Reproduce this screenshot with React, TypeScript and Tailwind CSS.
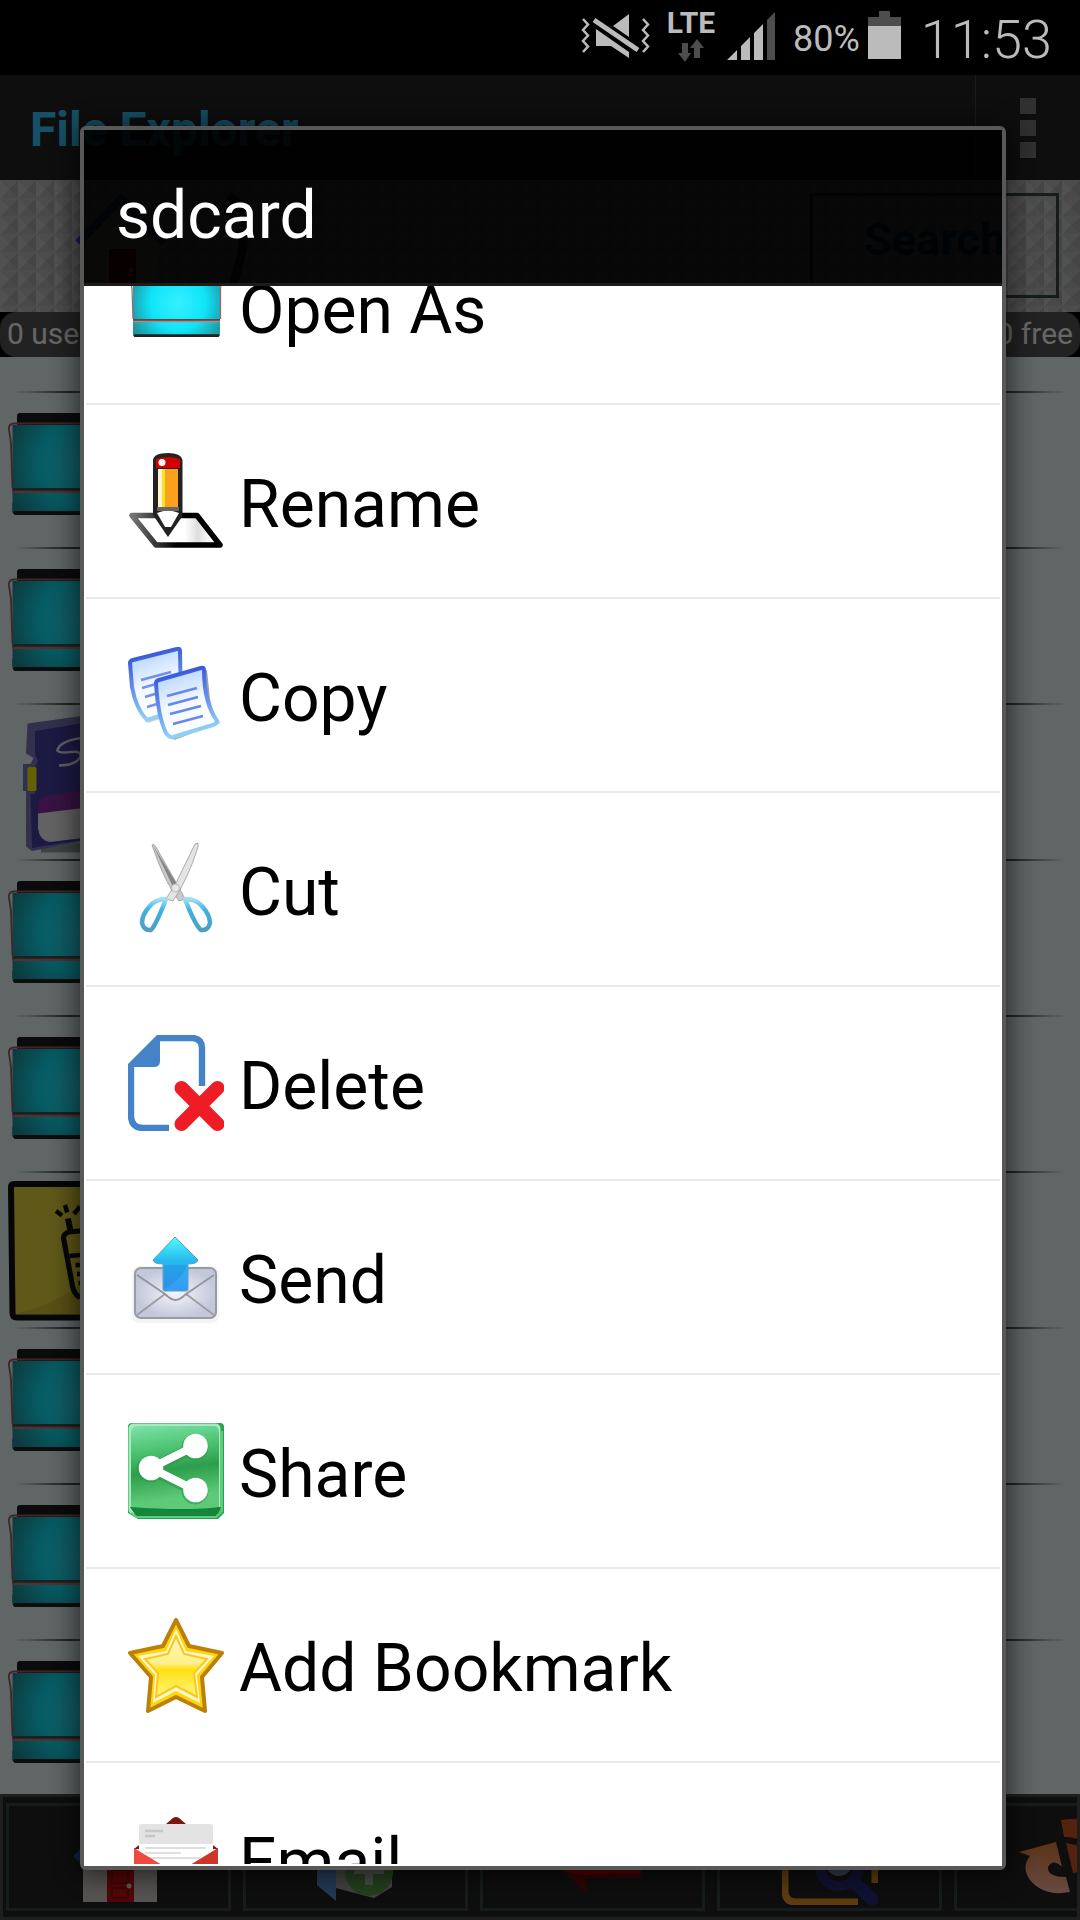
import { useLayoutEffect, useRef } from "react";
import type { ReactNode } from "react";

function FolderIcon() {
  return (
    <svg viewBox="0 0 96 96" className="size-full">
      <defs>
        <radialGradient id="folderFill" gradientUnits="userSpaceOnUse" cx="50" cy="44" r="50">
          <stop offset="0" stopColor="#35f0ff" />
          <stop offset="0.55" stopColor="#10e4f8" />
          <stop offset="1" stopColor="#20959f" />
        </radialGradient>
      </defs>
      <path d="M8 18 V12 Q8 10 10 10 H86 Q88 10 88 12 V18 Z" fill="#1c1c1c" />
      <path d="M5 70 H92 V75 Q92 78 89 78 H8 Q5 78 5 75 Z" fill="#222" />
      <path d="M5 18 H92 V76 H5 Z" fill="url(#folderFill)" />
      <path d="M5 60 L4 30 L2.500 20 Q3 17 6 17 H90 Q94 17 94 20 L92.500 30 V60" fill="none" stroke="#a5605e" strokeWidth="1.200" />
      <path d="M5 61.500 H92" stroke="#4a4f50" strokeWidth="3" />
      <path d="M5 62.500 H92" stroke="#c98078" strokeWidth="1.500" />
      <path d="M6 76.500 H91" stroke="#222" strokeWidth="2.500" />
    </svg>
  );
}

function SdCardIcon() {
  return (
    <svg viewBox="0 0 96 96" className="size-full">
      <path d="M24 92 L80 84 V95 H24 Z" fill="#9da5a5" />
      <path d="M15 9 L80 0 V82 L18 94 L14 91 V54 H12 V36 H17 L19 32 L14 29 Z" fill="#8078c4" />
      <path d="M20 14 L80 4 V82 L18 92 L17 56 H20 V38 L22 34 L20 30 Z" fill="#4640a8" />
      <rect x="15" y="38" width="6" height="16" rx="1" fill="#fff200" />
      <path d="M22 70 V64 Q22 58 30 57 L80 49 V66 Z" fill="#8a2ea8" />
      <path d="M22 69 L80 62 V82 L30 88 Q23 87 22 79 Z" fill="#f5f5f5" />
      <path d="M56 18 Q36 20 35 27 Q36 29 44 28 Q52 27 50 32 Q46 37 36 37" fill="none" stroke="#f0eeff" strokeWidth="1.800" />
    </svg>
  );
}

function PhoneIcon() {
  return (
    <svg viewBox="0 0 96 96" className="size-full">
      <path d="M4 6 Q4 4 6 4 H90 Q93 4 93 7 V90 Q93 93 90 93 H8 Q5 93 5 90 Z" fill="#eddc3e" stroke="#111" strokeWidth="4" />
      <path d="M5 91 Q30 86 55 68 L90 50 V91 Z" fill="#c6a820" opacity="0.4" />
      <path d="M34 22 L38 25 M40 18 L41.500 23 M50 19 L46 24" stroke="#111" strokeWidth="3" />
      <path d="M42 27 L44 37" stroke="#111" strokeWidth="4" />
      <path d="M39 40 Q39 37 43 36 L62 34 L67 76 L49 79 Q46 77 45 72 Z" fill="none" stroke="#111" strokeWidth="3.500" />
      <path d="M43 52 L64 50 M47 58 h4 M48 64 h4 M49 70 h4" stroke="#111" strokeWidth="3" />
    </svg>
  );
}

function RenameIcon() {
  return (
    <svg viewBox="0 0 96 96" className="size-full">
      <defs>
        <linearGradient id="paper" x1="0" y1="0" x2="1" y2="0">
          <stop offset="0.6" stopColor="#fff" />
          <stop offset="0.75" stopColor="#ddd" />
          <stop offset="0.9" stopColor="#fff" />
        </linearGradient>
        <linearGradient id="ink" x1="0" y1="0" x2="1" y2="0">
          <stop offset="0" stopColor="#777" />
          <stop offset="0.5" stopColor="#000" />
        </linearGradient>
      </defs>
      <path d="M4 62.500 H69 L92 92 H28 Z" fill="url(#paper)" stroke="url(#ink)" strokeWidth="5.500" strokeLinejoin="round" />
      <path d="M25 7 Q26 0 40 0 Q53 0 54.500 7 V63 L40 84 L25 62 Z" fill="#222" />
      <path d="M28 6 Q40 2 52 6 V15 H28 Z" fill="#d20000" />
      <circle cx="34" cy="9.500" r="3.500" fill="#fff" />
      <path d="M30 16 H50 V54 H30 Z" fill="#fba11b" />
      <path d="M30 16 H35 V54 H30 Z" fill="#fff6d0" />
      <path d="M34 16 H37 V54 H34 Z" fill="#fbe02c" />
      <path d="M29 60 Q40 55 51 60 L43 74 H37 Z" fill="#fff" />
      <path d="M29 54 H51 V58 H29 Z" fill="#666" />
    </svg>
  );
}

function CopyIcon() {
  return (
    <svg viewBox="0 0 96 96" className="size-full">
      <defs>
        <linearGradient id="sheet" x1="0" y1="0" x2="0.3" y2="1">
          <stop offset="0" stopColor="#a5cbff" />
          <stop offset="0.6" stopColor="#f4f9ff" />
          <stop offset="1" stopColor="#fff" />
        </linearGradient>
        <linearGradient id="sheetEdge" x1="0" y1="0" x2="0.2" y2="1">
          <stop offset="0" stopColor="#2c4bd4" />
          <stop offset="0.5" stopColor="#5d86ee" />
          <stop offset="1" stopColor="#8fd0f5" />
        </linearGradient>
      </defs>
      <path d="M4 18 L53 5 L56 64 L20 76 Q10 64 6 42 Z" fill="#777" opacity="0.35" />
      <path d="M2 16 Q2 14 5 13 L49 2 Q52 1 52 4 L53 62 L19 73 Q8 62 4 40 Z" fill="url(#sheet)" stroke="url(#sheetEdge)" strokeWidth="4" />
      <path d="M13 33 L43 25 M14 41 L35 35 M17 50 L30 46 M19 60 L29 57" stroke="#7290ee" strokeWidth="2.500" />
      <path d="M31 38 L79 23 L82 52 Q85 66 92 76 L46 93 Q35 80 31 38 Z" fill="#444" opacity="0.5" />
      <path d="M28 36 Q28 34 31 33 L73 21 Q76 20 76 23 Q76 56 89 74 Q89 77 85 78 L45 90 Q41 91 38 86 Q30 70 28 36 Z" fill="url(#sheet)" stroke="url(#sheetEdge)" strokeWidth="4" />
      <path d="M39 49 L69 41 M40 58 L70 50 M42 67 L73 59 M45 77 L75 69" stroke="#6788ea" strokeWidth="2.800" />
    </svg>
  );
}

function CutIcon() {
  return (
    <svg viewBox="0 0 96 96" className="size-full">
      <defs>
        <linearGradient id="handle" x1="0" y1="0" x2="0" y2="1">
          <stop offset="0" stopColor="#9fdff5" />
          <stop offset="0.35" stopColor="#3db2e2" />
          <stop offset="1" stopColor="#4e9fc0" />
        </linearGradient>
      </defs>
      <path d="M24 4 Q26 2 28 6 L54 52 L57 58 L51 60 Q36 40 24 4 Z" fill="#c9c9c9" stroke="#999" strokeWidth="0.800" />
      <path d="M26 6 L49 43 L46 48 Z" fill="#858585" />
      <path d="M70 2 L67 3 L48 42 L38 58 L45 60 Q60 38 70 6 Z" fill="#e4e4e4" stroke="#999" strokeWidth="0.800" />
      <circle cx="47.500" cy="47" r="4" fill="#e8e8e8" stroke="#aaa" strokeWidth="0.800" />
      <path d="M38 58 Q27 58 21 66 Q14 74 14 82 Q16 90 23 89 Q28 84 38 58 Z" fill="#fff" stroke="url(#handle)" strokeWidth="4.500" strokeLinejoin="round" />
      <path d="M57 58 Q68 58 74 65 Q82 74 82 82 Q80 90 73 89 Q67 84 57 58 Z" fill="#fff" stroke="url(#handle)" strokeWidth="4.500" strokeLinejoin="round" />
    </svg>
  );
}

function DeleteIcon() {
  return (
    <svg viewBox="0 0 96 96" className="size-full">
      <path d="M30 3 H65 Q74 4 74 13 V51 M3 30 V82 Q4 93 15 93 H41" fill="none" stroke="#4583c8" strokeWidth="6.400" />
      <path d="M0 29 L29 0 H32 V26 Q32 32 26 32 H0 Z" fill="#4583c8" />
      <path d="M53.500 53 L89.500 89 M89.500 53 L53.500 89" stroke="#ee1c25" strokeWidth="14" strokeLinecap="round" />
    </svg>
  );
}

function SendIcon() {
  return (
    <svg viewBox="0 0 96 96" className="size-full">
      <defs>
        <radialGradient id="envelope">
          <stop offset="0" stopColor="#f5f5fb" />
          <stop offset="1" stopColor="#c3c7da" />
        </radialGradient>
        <linearGradient id="arrowUp" x1="0" y1="0" x2="0" y2="1">
          <stop offset="0" stopColor="#4dfcff" />
          <stop offset="0.45" stopColor="#27b8ee" />
          <stop offset="1" stopColor="#3799f5" />
        </linearGradient>
      </defs>
      <rect x="4" y="37" width="87" height="57" rx="7" fill="#f4f4f4" />
      <rect x="7" y="39" width="81" height="50" rx="6" fill="url(#envelope)" stroke="#999aa2" strokeWidth="2" />
      <path d="M9 86 L37 65 M86 86 L58 65" stroke="#9b9ca3" strokeWidth="1.800" />
      <path d="M9 46 L37 65 Q43 71 47.500 71 Q52 71 58 65 L86 46" fill="none" stroke="#94959c" strokeWidth="1.800" />
      <path d="M47 8 L70 31 Q69 35 60 35 V60 Q60 62 58 62 H37 Q35 62 35 60 V35 Q26 35 25 31 Z" fill="url(#arrowUp)" stroke="#5a9fc0" strokeWidth="1" />
      <path d="M36 60 Q53 52 59 36 H36 Z" fill="#1978d0" opacity="0.3" />
    </svg>
  );
}

function ShareIcon() {
  return (
    <svg viewBox="0 0 96 96" className="size-full">
      <defs>
        <linearGradient id="shareFill" x1="0.2" y1="0" x2="0.35" y2="1">
          <stop offset="0" stopColor="#78e0a4" />
          <stop offset="0.3" stopColor="#4cc270" />
          <stop offset="0.55" stopColor="#2d9e4b" />
          <stop offset="0.9" stopColor="#5dca78" />
        </linearGradient>
      </defs>
      <path d="M4 0 H92 Q96 0 96 4 V90 L90 96 H10 L0 90 V4 Q0 0 4 0 Z" fill="#2da050" />
      <rect x="0.500" y="0.500" width="92" height="91" rx="5" fill="#a5ebbf" />
      <path d="M2 84 H93 L90 93 H8 Z" fill="#15853a" />
      <path d="M3 10 Q3 3 10 3 H86 Q91 3 91 10 V84 Q60 88 3 84 Z" fill="url(#shareFill)" />
      <path d="M3 90 L9 94 H88 L94 88 V8" fill="none" stroke="#58cf80" strokeWidth="2" />
      <g stroke="#279a49" fill="#279a49" opacity="0.6">
        <path d="M67 24 L22 46 L67 68" fill="none" strokeWidth="11" />
        <circle cx="67" cy="24" r="13" />
        <circle cx="22" cy="46" r="13" />
        <circle cx="67" cy="68" r="13" />
      </g>
      <path d="M67 23 L23 45 L67 67" fill="none" stroke="#fff" strokeWidth="8" />
      <circle cx="67.500" cy="23" r="12.300" fill="#fff" />
      <circle cx="23" cy="45" r="12.300" fill="#fff" />
      <circle cx="67.500" cy="67" r="12.300" fill="#fff" />
    </svg>
  );
}

function StarIcon() {
  const star = "M48 3 L61 29 L94 36 L74 60 L77 94 L48 80 L20 94 L23 60 L2 36 L35 29 Z";
  return (
    <svg viewBox="0 0 96 96" className="size-full">
      <defs>
        <linearGradient id="starFill" x1="0" y1="0" x2="0" y2="1">
          <stop offset="0" stopColor="#fff7c0" />
          <stop offset="0.45" stopColor="#fff08a" />
          <stop offset="0.55" stopColor="#ffe010" />
          <stop offset="1" stopColor="#fff780" />
        </linearGradient>
      </defs>
      <path d={star} fill="#ffd60a" stroke="#bb8008" strokeWidth="4" strokeLinejoin="round" />
      <path d="M48 12 L58 34 L86 39 L69 58 L72 86 L48 74 L25 86 L27 58 L10 39 L38 34 Z" fill="#fff6cf" />
      <path d="M48 19 L56 37 L79 42 L66 56 L69 80 L48 69 L28 80 L30 56 L17 42 L40 37 Z" fill="url(#starFill)" stroke="#fbc817" strokeWidth="2" />
    </svg>
  );
}

function EmailIcon() {
  return (
    <svg viewBox="0 0 96 96" className="size-full">
      <path d="M38 13 L45 7 Q48 5 51 7 L58 13 L90 38 H6 Z" fill="#7c1710" />
      <path d="M11 15 Q11 13 13 13 H83 Q85 13 85 15 V80 H11 Z" fill="#fff" />
      <path d="M11 15 Q11 13 13 13 H83 Q85 13 85 15 V33 H11 Z" fill="#e3e3e3" />
      <path d="M17 20 H35 M17 25 H27" stroke="#c6c6c6" strokeWidth="2.500" />
      <path d="M17 37 H78 M17 42 H53 M20 47 H72" stroke="#dedede" strokeWidth="2" />
      <path d="M6 37 L34 54 V92 H10 Q6 92 6 88 Z" fill="#ee4b3e" />
      <path d="M90 37 L62 54 V92 H86 Q90 92 90 88 Z" fill="#cc3529" />
      <path d="M8 92 L48 62 L88 92 Z" fill="#e04236" />
    </svg>
  );
}

function HomeIcon() {
  return (
    <svg viewBox="0 0 96 96" className="size-full">
      <path d="M12 48 L48 12 L86 48 V93 H12 Z" fill="#d6d2cc" />
      <path d="M5 50 L48 6 L91 50" fill="none" stroke="#3350b0" strokeWidth="8" />
      <rect x="36" y="56" width="27" height="37" fill="#d00e10" />
      <path d="M41 61 H57 V74 H41 Z M41 79 H57 V89 H41 Z" fill="none" stroke="#a00a0a" strokeWidth="2" />
      <circle cx="58" cy="77" r="2.500" fill="#e0e0e0" />
    </svg>
  );
}

function NewFolderIcon() {
  return (
    <svg viewBox="0 0 96 96" className="size-full">
      <path d="M24 20 L84 30 V78 L66 89 L24 78 Z" fill="#a6a6a6" />
      <path d="M9 14 L28 30 V92 L9 76 Z" fill="#5c90d6" />
      <circle cx="61" cy="63" r="24" fill="#5ca04c" />
      <path d="M61 46 V76 M46 61 H76" stroke="#b0c8aa" strokeWidth="8" />
    </svg>
  );
}

function BackIcon() {
  return (
    <svg viewBox="0 0 96 96" className="size-full">
      <path d="M0 44 L42 6 L40 24 H96 V69 H41 L42 84 Z" fill="#c80014" />
      <path d="M96 64 V69 H41 L42 84 L18 62 L38 66 Z" fill="#7c0c0a" />
    </svg>
  );
}

function FindIcon() {
  return (
    <svg viewBox="0 0 96 96" className="size-full">
      <path d="M76 93 H14 Q3 93 3 82 V14 Q3 3 14 3 H82 Q93 3 93 14 V74" fill="none" stroke="#ee9626" strokeWidth="7" />
      <path d="M73 74 L90 90" stroke="#2a2d80" strokeWidth="13" strokeLinecap="round" />
      <circle cx="57" cy="58" r="19" fill="none" stroke="#2a2d80" strokeWidth="10" />
      <circle cx="57" cy="54" r="13" fill="#7da2bc" />
    </svg>
  );
}

function RefreshIcon() {
  return (
    <svg viewBox="0 0 96 96" className="size-full">
      <defs>
        <linearGradient id="swirl" x1="0" y1="0" x2="0" y2="1">
          <stop offset="0" stopColor="#e8803c" />
          <stop offset="1" stopColor="#ffb8a8" />
        </linearGradient>
      </defs>
      <path d="M0 43 L37 33 L43 58 Q34 49 29 58 Q28 68 47 68 L51 83 Q25 88 11 71 Q2 58 11 47 Z" fill="url(#swirl)" />
      <path d="M42 11 Q72 6 86 28 L94 26 L84 58 L54 64 L47 34 L66 38 Q60 27 45 28 Z" fill="#d4561c" />
    </svg>
  );
}

function StatusBar() {
  return (
    <header className="relative z-20 flex h-[75px] shrink-0 items-start justify-end bg-black pr-[28px] text-[#bbb]">
      <svg viewBox="0 0 72 48" className="mt-[12px] h-[48px] w-[72px]">
        <g fill="none" stroke="#bbb" strokeWidth="2.500">
          <path d="M4 7 L9 12.500 L4 18 L9 23.500 L4 29 L9 34.500 L4 40" />
          <path d="M64 7 L69 12.500 L64 18 L69 23.500 L64 29 L69 34.500 L64 40" />
        </g>
        <path d="M34 14 L50 2 V25 Z M17 17 L50 40 V46 L32 34 H17 Z" fill="#bbb" />
        <path d="M15 8 L59 38" stroke="#000" strokeWidth="10" />
        <path d="M15 8 L59 38" stroke="#bbb" strokeWidth="5" />
      </svg>
      <div className="ml-[14px] mt-[8px] flex w-[52px] flex-col items-center">
        <span className="text-[30px] font-bold leading-[29px]">LTE</span>
        <svg viewBox="0 0 28 24" className="mt-[2px] h-[24px] w-[28px]" fill="#4d4d4d">
          <path d="M5 4 H11 V14 H14 L8 23 L1 14 H5 Z M17 19 H23 V9 H27 L20 0 L13 9 H17 Z" />
        </svg>
      </div>
      <svg viewBox="0 0 48 48" className="ml-[10px] mt-[12px] size-[48px]">
        <path d="M0 48 L10 38 V48 Z M14 34 L23 25 V48 H14 Z M27 21 L36 12 V48 H27 Z" fill="#bbb" />
        <path d="M40 8 L48 0 V48 H40 Z" fill="#4d4d4d" />
      </svg>
      <span className="ml-[18px] mt-[18px] text-[36px] leading-[42px]">80%</span>
      <svg viewBox="0 0 33 48" className="ml-[8px] mt-[11px] h-[48px] w-[33px]">
        <path d="M11 0 H22 V6 H33 V15 H0 V6 H11 Z" fill="#4d4d4d" />
        <path d="M0 15 H33 V48 H0 Z" fill="#bbb" />
      </svg>
      <span className="ml-[20px] mt-[8px] text-[54px] font-light leading-[64px]">11:53</span>
    </header>
  );
}

const files = ["folder", "folder", "sd", "folder", "folder", "phone", "folder", "folder", "folder"];

function FileIcon({ type }: { type: string }) {
  if (type === "sd") return <SdCardIcon />;
  if (type === "phone") return <PhoneIcon />;
  return <FolderIcon />;
}

const tools: { name: string; icon: ReactNode }[] = [
  { name: "Home", icon: <HomeIcon /> },
  { name: "New folder", icon: <NewFolderIcon /> },
  { name: "Back", icon: <BackIcon /> },
  { name: "Find", icon: <FindIcon /> },
  { name: "Refresh", icon: <RefreshIcon /> },
];

function Explorer() {
  return (
    <main className="flex min-h-0 flex-1 flex-col">
      <div className="flex h-[105px] shrink-0 items-stretch justify-between bg-[#232323]">
        <h1 className="self-center pl-[30px] pt-1 text-[48px] font-bold leading-[56px] text-[#39c8ff]">
          File Explorer
        </h1>
        <button aria-label="Menu" className="flex w-[105px] flex-col items-center justify-center gap-[6px] border-l border-[#3a4646]">
          <i className="size-4 bg-[#787878]"></i>
          <i className="size-4 bg-[#787878]"></i>
          <i className="size-4 bg-[#787878]"></i>
        </button>
      </div>

      <div className="flex h-[132px] shrink-0 items-start justify-between bg-[#b8b8b8] bg-[conic-gradient(from_45deg,#acacac_25%,#b6b6b6_0_50%,#cacaca_0_75%,#bebebe_0)] bg-[length:18px_18px] pl-[73px] pr-[21px] pt-[13px]">
        <div className="flex gap-[46px]">
          <button aria-label="Go home" className="size-24">
            <HomeIcon />
          </button>
          <svg viewBox="0 0 50 96" className="h-24 w-[50px]">
            <path d="M14 2 Q36 20 28 50 Q25 72 18 92" fill="none" stroke="#333" strokeWidth="9" />
          </svg>
        </div>
        <button className="h-[105px] w-[249px] border-[3px] border-[#394646] pb-3 text-[45px] font-bold text-[#05598c]">
          Search
        </button>
      </div>

      <div className="shrink-0 bg-black">
        <div className="flex h-[45px] items-center justify-between rounded-[16px] bg-[#555] px-[7px] pb-[2px] text-[30px] leading-[36px] text-white">
          <span>0 used</span>
          <span>0 free</span>
        </div>
      </div>

      <ul className="min-h-0 flex-1 overflow-hidden bg-[#efffff] pt-[34px]">
        {files.map((type, index) => (
          <li key={index} className="h-[156px]">
            <div className="mx-[14px] h-[2px] bg-[linear-gradient(to_right,transparent,#555_5%,#555_95%,transparent)]"></div>
            <div className="flex h-[154px] items-center pl-[5px]">
              <div className="size-36">
                <FileIcon type={type} />
              </div>
            </div>
          </li>
        ))}
      </ul>

      <nav className="flex h-[126px] shrink-0 gap-[12px] overflow-hidden border-[3px] border-[#4c4c4c] bg-[#232323] px-[3px] py-[6px]">
        {tools.map((tool) => (
          <button
            key={tool.name}
            aria-label={tool.name}
            className="flex h-[108px] w-[225px] shrink-0 items-center justify-center border-[3px] border-[#394646]"
          >
            <div className="size-24">{tool.icon}</div>
          </button>
        ))}
      </nav>
    </main>
  );
}

const actions: { label: string; icon: ReactNode }[] = [
  { label: "Open As", icon: <FolderIcon /> },
  { label: "Rename", icon: <RenameIcon /> },
  { label: "Copy", icon: <CopyIcon /> },
  { label: "Cut", icon: <CutIcon /> },
  { label: "Delete", icon: <DeleteIcon /> },
  { label: "Send", icon: <SendIcon /> },
  { label: "Share", icon: <ShareIcon /> },
  { label: "Add Bookmark", icon: <StarIcon /> },
  { label: "Email", icon: <EmailIcon /> },
];

function ActionDialog() {
  const listRef = useRef<HTMLUListElement>(null);

  //the list opens a little scrolled
  useLayoutEffect(() => {
    if (listRef.current) listRef.current.scrollTop = 75;
  }, []);

  return (
    <div className="fixed inset-0 z-10 flex flex-col bg-black/60 pb-[50px] pl-[80px] pr-[74px] pt-[126px]">
      <section
        role="dialog"
        aria-labelledby="dialogTitle"
        className="flex min-h-0 flex-1 flex-col rounded-[6px] border-4 border-[#585858] shadow-[0_2px_28px_4px_rgba(0,0,0,0.6)]"
      >
        <h2
          id="dialogTitle"
          className="h-[156px] shrink-0 border-b-[3px] border-[#1c1c1c] bg-black/90 pl-8 pt-[47px] text-[66px] leading-[78px] text-white"
        >
          sdcard
        </h2>
        <div className="flex min-h-0 flex-1 flex-col bg-white px-[2px] pb-[2px]">
          <ul ref={listRef} className="min-h-0 flex-1 overflow-y-auto [scrollbar-width:none]">
            {actions.map((action) => (
              <li key={action.label} className="border-b-2 border-[#ebebeb]">
                <button className="flex h-[192px] w-full items-center gap-[15px] pl-[42px] text-left">
                  <span className="size-24 shrink-0">{action.icon}</span>
                  <span className="pt-[7px] text-[66px] leading-[78px] text-black">{action.label}</span>
                </button>
              </li>
            ))}
          </ul>
        </div>
      </section>
    </div>
  );
}

export default function App() {
  return (
    <div className="flex h-screen flex-col overflow-hidden bg-black font-['Roboto',sans-serif]">
      <StatusBar />
      <Explorer />
      <ActionDialog />
    </div>
  );
}
